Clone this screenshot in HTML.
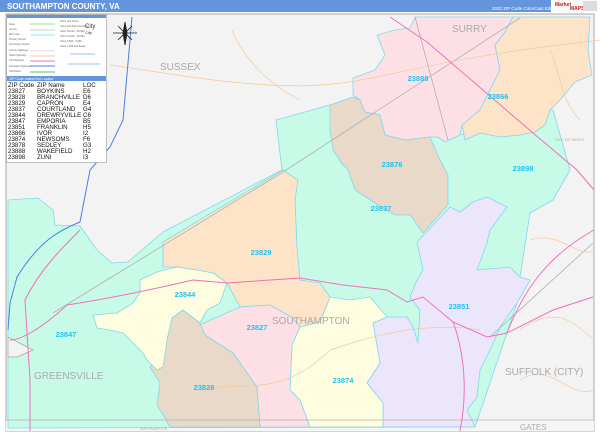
<!DOCTYPE html>
<html><head><meta charset="utf-8"><style>
html,body{margin:0;padding:0;background:#fff;}
body{width:600px;height:435px;overflow:hidden;position:relative;font-family:"Liberation Sans",sans-serif;}
</style></head><body>
<svg width="600" height="435" viewBox="0 0 600 435" xmlns="http://www.w3.org/2000/svg" style="position:absolute;left:0;top:0">
<rect x="0" y="0" width="600" height="435" fill="#fff"/>
<rect x="0" y="0" width="551" height="12" fill="#6495dc"/>
<text x="7" y="9" font-size="8" font-weight="bold" fill="#fff" font-family="Liberation Sans">SOUTHAMPTON COUNTY, VA</text>
<text x="492" y="10" font-size="4.5" fill="#fff" font-family="Liberation Sans">2022 ZIP Code ColorCast Edition</text>
<rect x="553" y="0" width="45" height="12" fill="#fafafa"/>
<text x="555" y="6" font-size="5" fill="#c02020" font-weight="bold" font-family="Liberation Sans">Market</text>
<text x="570" y="10" font-size="5" fill="#c02020" font-weight="bold" font-family="Liberation Sans">MAPS</text>
<rect x="583" y="1" width="14" height="10" fill="#ddd"/>
<rect x="6" y="14" width="588" height="417" fill="#f3f3f3" stroke="#aaa" stroke-width="1"/>
<rect x="6" y="420" width="588" height="11" fill="#f5f5f5"/>
<g stroke="#7fd8ec" stroke-width="0.8" stroke-linejoin="round">
<polygon fill="#c8fbe7" points="8,200 38,198 53,210 55,225 80,226 97,250 112,263 128,262 163,232 282,170 276,120 330,105 430,137 480,133 545,112 553,110 570,170 553,200 530,213 520,277 517,303 475,427 8,428"/>
<polygon fill="#f3f3f3" stroke="#aaa" points="8,337 33,350 17,357 8,357"/>
<polygon fill="#fde0e6" points="415,17 513,17 505,32 495,45 500,70 480,110 462,125 460,135 445,142 438,137 430,137 405,140 385,135 380,115 365,112 360,100 353,95 353,78 375,70 385,55 377,35 395,30 410,28"/>
<polygon fill="#fde3c8" points="513,17 590,17 588,50 592,75 575,82 560,100 550,110 545,125 535,132 520,135 500,137 480,133 465,140 462,125 480,110 500,70 495,45 505,32"/>
<polygon fill="#e8d9c8" points="330,105 353,97 360,100 365,112 380,115 385,135 405,140 430,137 440,160 448,175 448,205 423,233 410,215 395,215 378,205 355,190 348,170 343,165 333,150 330,130"/>
<polygon fill="#ece6fc" points="450,207 460,212 473,202 487,197 507,207 490,230 487,243 477,270 510,267 520,277 530,280 517,303 500,327 490,350 480,370 477,397 467,410 475,427 383,427 383,403 367,383 380,363 373,323 387,317 407,317 413,327 418,343 420,310 410,297 417,280 423,270 417,242"/>
<polygon fill="#fffde0" points="300,327 320,322 330,297 350,300 370,297 387,317 373,323 380,363 367,383 383,403 383,427 310,427 300,400 290,390 292,345"/>
<polygon fill="#fde3c8" points="163,242 283,170 298,180 295,200 297,247 300,280 320,283 330,297 320,322 300,327 293,318 270,305 240,307 227,283 213,273 197,270 177,267 163,267"/>
<polygon fill="#fde0e6" points="200,325 215,318 240,307 270,305 293,318 300,327 292,345 290,390 300,400 310,427 260,427 257,387 233,353 205,335"/>
<polygon fill="#e8d9c8" points="183,310 200,323 205,335 233,353 257,387 260,427 170,427 165,418 157,405 160,383 150,367 160,360 165,335 172,318"/>
<polygon fill="#fffde0" points="140,280 157,272 177,267 197,270 213,273 227,283 220,303 207,310 200,323 183,310 172,318 167,340 163,367 157,370 147,360 143,353 133,343 123,333 110,330 97,328 93,315 117,313 133,303 140,293"/>
</g>
<g fill="none" stroke="#b0b0b0" stroke-width="0.8">
<line x1="53" y1="313" x2="283" y2="172"/>
<line x1="283" y1="172" x2="520" y2="18"/>
<line x1="593" y1="243" x2="490" y2="337"/>
<line x1="415" y1="17" x2="448" y2="140"/>
<line x1="6" y1="420" x2="594" y2="420"/>
</g>
<g fill="none" stroke="#f5c89a" stroke-width="0.7">
<path d="M110,65 C150,70 250,90 320,85 C380,82 420,60 600,40"/>
<path d="M232,30 C240,50 260,80 300,100"/>
<path d="M200,390 C240,380 280,400 330,350 C360,340 420,320 480,330"/>
<path d="M520,330 C560,300 580,330 594,340"/>
<path d="M530,240 C560,230 580,260 594,250"/>
<path d="M520,380 C550,360 570,400 594,390"/>
<path d="M550,50 C560,70 560,100 580,120"/>
</g>
<g fill="none" stroke="#f070b8" stroke-width="1">
<path d="M10,340 C20,340 40,330 67,305 C100,300 150,290 193,280 L227,283 L300,278 L343,285 L387,290 L407,302 L423,297 L453,322 L487,337 L507,333 L553,310 L593,297"/>
<path d="M390,17 L427,42 L533,133 L577,170 L594,190"/>
<path d="M80,230 C60,250 40,270 25,300 L30,380 L30,431"/>
<path d="M453,322 C460,340 470,380 460,431"/>
<path d="M507,333 C520,300 540,260 594,230"/>
</g>
<path d="M132,17 L128,63 L123,120 L110,147 L90,170 L80,222 C60,230 40,240 17,277 L10,303 L8,330" fill="none" stroke="#4d7fe0" stroke-width="1"/>
<rect x="6.5" y="14.5" width="100" height="148" fill="#fff" stroke="#999" stroke-width="0.6"/>
<rect x="7" y="15" width="99" height="3" fill="#6495dc"/>
<g stroke-width="1">
<line x1="30" y1="24" x2="55" y2="24" stroke="#8de68d"/>
<line x1="30" y1="30" x2="55" y2="30" stroke="#ccc"/>
<line x1="30" y1="35" x2="55" y2="35" stroke="#8ee8f0"/>
<line x1="30" y1="51" x2="55" y2="51" stroke="#ddd"/>
<line x1="30" y1="56" x2="55" y2="56" stroke="#f5c89a"/>
<line x1="30" y1="61" x2="55" y2="61" stroke="#f070b8"/>
<line x1="30" y1="66" x2="55" y2="66" stroke="#4d7fe0"/>
<line x1="30" y1="72" x2="55" y2="72" stroke="#4ccc4c"/>
<line x1="68" y1="64" x2="100" y2="64" stroke="#4d7fe0" stroke-width="0.6"/>
<line x1="70" y1="54" x2="95" y2="54" stroke="#4d7fe0" stroke-width="0.6"/>
</g>
<g font-size="2.5" fill="#666" font-family="Liberation Sans">
<text x="9" y="25">State</text><text x="9" y="30">County</text><text x="9" y="35">ZIP Code</text><text x="9" y="40">Primary Streets</text><text x="9" y="45">Secondary Streets</text><text x="9" y="51">County Highways</text><text x="9" y="56">State Highways</text><text x="9" y="61">US Highways</text><text x="9" y="67">Interstate Highways</text><text x="9" y="72">Toll Roads</text>
<text x="60" y="22">Cities and Towns</text><text x="60" y="27">Cities 100,000 and Above</text><text x="60" y="32">Cities 50,000 - 99,999</text><text x="60" y="37">Cities 10,000 - 49,999</text><text x="60" y="42">Cities 2,500 - 9,999</text><text x="60" y="47">Cities 2,499 and Below</text>
</g>
<text x="85" y="28" font-size="6" fill="#333" font-family="Liberation Sans">City</text>
<text x="85" y="34" font-size="4" fill="#333" font-family="Liberation Sans">City</text>
<rect x="7" y="76" width="99" height="5" fill="#6495dc"/>
<text x="9" y="80" font-size="3.5" fill="#fff" font-family="Liberation Sans">ZIP Code Index/Grid Locator</text>
<g font-size="6.2" fill="#111" font-family="Liberation Sans">
<text x="8" y="87">ZIP Code</text><text x="37" y="87">ZIP Name</text><text x="83" y="87">LOC</text>
<text x="8" y="93">23827</text><text x="37" y="93">BOYKINS</text><text x="83" y="93">E6</text>
<text x="8" y="99">23828</text><text x="37" y="99">BRANCHVILLE</text><text x="83" y="99">D6</text>
<text x="8" y="105">23829</text><text x="37" y="105">CAPRON</text><text x="83" y="105">E4</text>
<text x="8" y="111">23837</text><text x="37" y="111">COURTLAND</text><text x="83" y="111">G4</text>
<text x="8" y="117">23844</text><text x="37" y="117">DREWRYVILLE</text><text x="83" y="117">C6</text>
<text x="8" y="123">23847</text><text x="37" y="123">EMPORIA</text><text x="83" y="123">B5</text>
<text x="8" y="129">23851</text><text x="37" y="129">FRANKLIN</text><text x="83" y="129">H5</text>
<text x="8" y="135">23866</text><text x="37" y="135">IVOR</text><text x="83" y="135">I2</text>
<text x="8" y="141">23874</text><text x="37" y="141">NEWSOMS</text><text x="83" y="141">F6</text>
<text x="8" y="147">23878</text><text x="37" y="147">SEDLEY</text><text x="83" y="147">G3</text>
<text x="8" y="153">23888</text><text x="37" y="153">WAKEFIELD</text><text x="83" y="153">H2</text>
<text x="8" y="159">23898</text><text x="37" y="159">ZUNI</text><text x="83" y="159">I3</text>
</g>
<g stroke="#222" stroke-width="0.8" fill="#222">
<line x1="125" y1="22" x2="125" y2="45"/><line x1="113" y1="33" x2="137" y2="33"/>
<line x1="118" y1="26" x2="132" y2="40"/><line x1="132" y1="26" x2="118" y2="40"/>
<polygon points="125,22 127,33 125,45 123,33"/>
</g>
<g fill="#aaa" font-family="Liberation Sans" font-size="10">
<text x="160" y="70">SUSSEX</text>
<text x="452" y="32">SURRY</text>
<text x="34" y="379">GREENSVILLE</text>
<text x="272" y="324">SOUTHAMPTON</text>
<text x="505" y="375">SUFFOLK (CITY)</text>
<text x="520" y="430" font-size="8">GATES</text>
<text x="555" y="141" font-size="4">ISLE OF WIGHT</text>
<text x="140" y="430" font-size="3.5">NORTHAMPTON</text>
</g>
<g fill="#1fc3f3" font-family="Liberation Sans" font-size="7.5" font-weight="bold" text-anchor="middle">
<text x="418" y="81">23888</text>
<text x="498" y="99">23866</text>
<text x="392" y="167">23876</text>
<text x="523" y="171">23898</text>
<text x="381" y="211">23837</text>
<text x="261" y="255">23829</text>
<text x="185" y="297">23844</text>
<text x="66" y="337">23847</text>
<text x="257" y="330">23827</text>
<text x="459" y="309">23851</text>
<text x="343" y="383">23874</text>
<text x="204" y="390">23828</text>
</g>
</svg>
</body></html>
